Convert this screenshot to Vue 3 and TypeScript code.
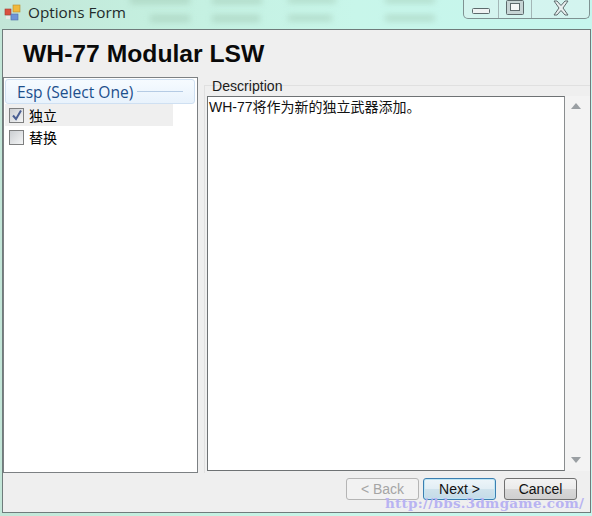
<script setup lang="ts">
const smears = [
  { left: '130px', top: '-4px', width: '60px', height: '8px' },
  { left: '150px', top: '15px', width: '40px', height: '7px' },
  { left: '212px', top: '-3px', width: '50px', height: '7px' },
  { left: '212px', top: '15px', width: '48px', height: '7px' },
  { left: '288px', top: '-3px', width: '48px', height: '6px' },
  { left: '288px', top: '15px', width: '44px', height: '6px' },
  { left: '385px', top: '-3px', width: '50px', height: '6px' },
  { left: '385px', top: '15px', width: '50px', height: '6px' },
]
</script>

<template>
  <div class="root">
    <span v-for="(s, i) in smears" :key="i" class="smear" :style="s"></span>
    <header class="titlebar">
      <svg class="appicon" width="17" height="17" viewBox="0 0 17 17">
        <rect x="9" y="1" width="7" height="7" fill="#f0b93c" stroke="#b88a2a" stroke-width=".6" />
        <rect x="1" y="5" width="6" height="6" fill="#d9503f" stroke="#a23a30" stroke-width=".6" />
        <rect x="7" y="10" width="7" height="6" fill="#6f94d6" stroke="#4f6fa8" stroke-width=".6" />
        <rect x="2" y="12" width="4" height="3" fill="#e8e8e8" />
      </svg>
      <span class="wintitle">Options Form</span>
      <div class="winbtns">
        <div class="winbtn min"><svg width="18" height="6" viewBox="0 0 18 6"><rect x=".5" y=".5" width="17" height="5" rx="1" fill="#eef2f2" stroke="#5d6a6c" /></svg></div>
        <div class="winbtn max"><svg width="18" height="15" viewBox="0 0 18 15"><rect x=".5" y=".5" width="17" height="14" rx="1" fill="#c6d4d4" stroke="#5d6a6c" /><rect x="4.5" y="3.5" width="9" height="7" fill="#f4f7f7" stroke="#5d6a6c" /></svg></div>
        <div class="winbtn close"><svg width="18" height="16" viewBox="0 0 18 16"><path d="M2 1 L5 1 L9 5.5 L13 1 L16 1 L11 8 L16 15 L13 15 L9 10.5 L5 15 L2 15 L7 8 Z" fill="#e8eeee" stroke="#5d6a6c" /></svg></div>
      </div>
    </header>

    <main class="form">
      <h1 class="heading">WH-77 Modular LSW</h1>
      <div class="panels">
        <section class="left">
          <div class="grouphead"><span>Esp (Select One)</span><i class="rule"></i></div>
          <label class="opt sel">
            <span class="box">
              <svg width="12" height="12" viewBox="0 0 12 12"><path d="M2 6.5 L5 10 L10 1.5" fill="none" stroke="#4a5f93" stroke-width="2" /></svg>
            </span>
            <span>独立</span>
          </label>
          <label class="opt">
            <span class="box"></span>
            <span>替换</span>
          </label>
        </section>
        <section class="right">
          <div class="legend">Description</div>
          <div class="descrow">
            <div class="desc">WH-77将作为新的独立武器添加。</div>
            <div class="scroll">
              <svg width="10" height="6" viewBox="0 0 10 6"><path d="M0 6 L5 0 L10 6 Z" fill="#9a9fa3" /></svg>
              <svg width="10" height="6" viewBox="0 0 10 6"><path d="M0 0 L5 6 L10 0 Z" fill="#9a9fa3" /></svg>
            </div>
          </div>
        </section>
      </div>
      <footer class="actions">
        <button class="btn disabled" type="button">&lt; Back</button>
        <button class="btn focus" type="button">Next &gt;</button>
        <button class="btn cancel" type="button">Cancel</button>
      </footer>
    </main>
    <div class="watermark">http://bbs.3dmgame.com/</div>
  </div>
</template>

<style>
html, body { margin: 0; padding: 0; }
</style>

<style scoped>
.root {
  position: relative;
  width: 592px;
  height: 516px;
  overflow: hidden;
  background: linear-gradient(90deg, #c3e6d8 0%, #c4efdf 25%, #c8f6ea 60%, #c6f6ee 100%);
  font-family: "Liberation Sans", "Noto Sans CJK SC", sans-serif;
  color: #000;
}
.smear {
  position: absolute;
  background: #a8d0bc;
  filter: blur(3px);
  opacity: .7;
}
.titlebar {
  position: relative;
  height: 29px;
  display: flex;
  align-items: flex-start;
  box-sizing: border-box;
}
.appicon { margin: 4px 0 0 4px; }
.wintitle {
  margin: 1px 0 0 7px;
  font-family: "Open Sans", "Liberation Sans", sans-serif;
  font-size: 15.3px;
  line-height: 22px;
  color: #222b2b;
}
.winbtns {
  margin-left: auto;
  margin-right: 2px;
  width: 127px;
  height: 19px;
  display: flex;
  box-sizing: border-box;
  border: 1px solid #7f9292;
  border-top: 0;
  border-radius: 0 0 5px 5px;
  background: rgba(222, 242, 240, .55);
}
.winbtn { display: flex; justify-content: center; box-sizing: border-box; }
.min { width: 35px; border-right: 1px solid #a3b6b6; align-items: flex-end; padding-bottom: 4px; }
.max { width: 33px; border-right: 1px solid #a3b6b6; align-items: flex-start; }
.close { flex: 1; align-items: flex-start; }
.form {
  margin-left: 2px;
  margin-right: 1px;
  height: 484px;
  box-sizing: border-box;
  border: 1px solid #6f7b7b;
  background: #efefef;
  display: flex;
  flex-direction: column;
}
.heading {
  margin: 0;
  height: 47px;
  padding: 9px 0 0 20px;
  box-sizing: border-box;
  font-size: 24.7px;
  line-height: 30px;
  font-weight: 700;
  color: #0a0a0a;
  white-space: nowrap;
}
.panels {
  display: flex;
  height: 396px;
}
.left {
  width: 195px;
  box-sizing: border-box;
  background: #fff;
  border: 1px solid #7c8083;
  padding: 1px 0 0 1px;
}
.grouphead {
  width: 190px;
  height: 25px;
  box-sizing: border-box;
  display: flex;
  align-items: center;
  padding-left: 11px;
  gap: 4px;
  border: 1px solid #cfe0f2;
  border-radius: 3px;
  background: linear-gradient(#f6fbff, #e8f2fc);
  font-family: "Open Sans", "Noto Sans", sans-serif;
  font-size: 15.6px;
  line-height: 20px;
  color: #1d4f8c;
  white-space: nowrap;
}
.rule { width: 46px; height: 1px; background: #b5cbe4; }
.opt {
  width: 168px;
  height: 22px;
  display: flex;
  align-items: center;
  gap: 5px;
  padding-left: 4px;
  box-sizing: border-box;
  font-family: "Noto Sans CJK SC", sans-serif;
  font-size: 14px;
  color: #000;
}
.sel { background: #efefef; }
.box {
  width: 15px;
  height: 15px;
  box-sizing: border-box;
  border: 1px solid #7e7f80;
  background: linear-gradient(135deg, #cbced2, #f4f5f6);
  display: flex;
  align-items: center;
  justify-content: center;
}
.right {
  margin: 8px 0 0 6px;
  flex: 1;
  min-width: 0;
  display: flex;
  flex-direction: column;
  border-top: 1px solid #e0e0e0;
  border-left: 1px solid #e0e0e0;
  padding-left: 2px;
}
.legend {
  height: 18px;
  padding-left: 5px;
  margin-top: -8px;
  font-size: 14.1px;
  line-height: 17px;
  color: #1c1c1c;
}
.descrow { display: flex; height: 375px; }
.desc {
  width: 358px;
  box-sizing: border-box;
  border: 1px solid #6e7274;
  border-right-color: #8a8d8f;
  background: #fff;
  padding: 1px;
  font-size: 14px;
  line-height: 18px;
  color: #111;
}
.scroll {
  flex: 1;
  display: flex;
  flex-direction: column;
  justify-content: space-between;
  align-items: center;
  padding: 7px 3px 8px 0;
  box-sizing: border-box;
  background: #f3f3f3;
}
.actions {
  flex: 1;
  display: flex;
  align-items: flex-start;
  justify-content: flex-end;
  gap: 4px;
  padding: 5px 13px 0 0;
}
.btn {
  width: 73px;
  height: 22px;
  padding: 0;
  margin: 0;
  box-sizing: border-box;
  border: 1px solid #707070;
  border-radius: 3px;
  background: linear-gradient(#f3f3f3 0%, #ebebeb 48%, #d8d8d8 52%, #cfcfcf 100%);
  font-family: "Liberation Sans", sans-serif;
  font-size: 14px;
  line-height: 20px;
  color: #111;
}
.btn.cancel { margin-left: 4px; }
.btn.disabled { border-color: #b5b5b5; background: #f2f2f2; color: #a5a5a5; }
.btn.focus {
  border-color: #3c7fb1;
  box-shadow: inset 0 0 0 1px #bfe6f4;
  background: linear-gradient(#edf5f9 0%, #e2eef5 48%, #cfe2ec 52%, #c4dbe8 100%);
}
.watermark {
  position: absolute;
  left: 385px;
  top: 494px;
  font-family: "DejaVu Serif", serif;
  font-weight: 700;
  font-size: 13.5px;
  line-height: 18px;
  letter-spacing: .27px;
  color: #b8b3f2;
  white-space: nowrap;
}
</style>
